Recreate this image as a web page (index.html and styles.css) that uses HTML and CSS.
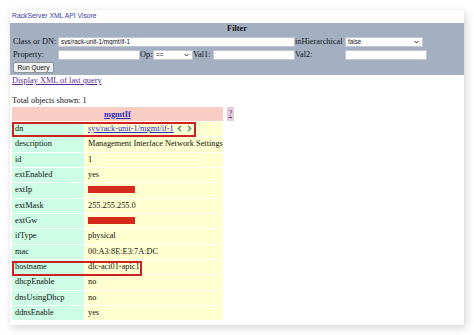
FILE: index.html
```html
<!DOCTYPE html>
<html>
<head>
<meta charset="utf-8">
<link rel="stylesheet" href="styles.css">
</head>
<body>
<div class="card">
  <div class="title">RackServer XML API Visore</div>
  <div class="filter">
    <div class="filter-title">Filter</div>
    <div class="filter-grid">
      <label class="lbl">Class or DN:</label>
      <input class="inp span5" type="text" value="sys/rack-unit-1/mgmt/if-1">
      <label class="lbl">inHierarchical</label>
      <span class="sel sel-wide"><span class="sel-text">false</span><svg class="chev" viewBox="0 0 8 6" width="5" height="4"><path d="M1 1.5 L4 4.5 L7 1.5" fill="none" stroke="#222" stroke-width="1.6"/></svg></span>

      <label class="lbl">Property:</label>
      <input class="inp" type="text" value="">
      <label class="lbl">Op:</label>
      <span class="sel"><span class="sel-text">==</span><svg class="chev" viewBox="0 0 8 6" width="5" height="4"><path d="M1 1.5 L4 4.5 L7 1.5" fill="none" stroke="#222" stroke-width="1.6"/></svg></span>
      <label class="lbl">Val1:</label>
      <input class="inp" type="text" value="">
      <label class="lbl">Val2:</label>
      <input class="inp" type="text" value="">

      <button class="btn" type="button">Run Query</button>
    </div>
  </div>
  <div class="xml-link"><a href="#">Display XML of last query</a></div>
  <div class="total">Total objects shown: 1</div>
  <div class="table-wrap">
    <table class="obj">
      <thead>
        <tr>
          <th colspan="2" class="head"><a href="#">mgmtIf</a></th>
          <th class="help-cell"><span class="help">?</span></th>
        </tr>
      </thead>
      <tbody>
        <tr><td class="k">dn</td><td class="v"><a href="#">sys/rack-unit-1/mgmt/if-1</a><svg class="nav" viewBox="0 0 18 8" width="17" height="7"><path d="M5 1 L2 4 L5 7" fill="none" stroke="#3f8f8c" stroke-width="1.6"/><path d="M13 1 L16 4 L13 7" fill="none" stroke="#3f8f8c" stroke-width="1.6"/></svg></td><td class="e"></td></tr>
        <tr><td class="k">description</td><td class="v">Management Interface Network Settings</td><td class="e"></td></tr>
        <tr><td class="k">id</td><td class="v">1</td><td class="e"></td></tr>
        <tr><td class="k">extEnabled</td><td class="v">yes</td><td class="e"></td></tr>
        <tr><td class="k">extIp</td><td class="v"><span class="redact"></span></td><td class="e"></td></tr>
        <tr><td class="k">extMask</td><td class="v">255.255.255.0</td><td class="e"></td></tr>
        <tr><td class="k">extGw</td><td class="v"><span class="redact"></span></td><td class="e"></td></tr>
        <tr><td class="k">ifType</td><td class="v">physical</td><td class="e"></td></tr>
        <tr><td class="k">mac</td><td class="v">00:A3:8E:E3:7A:DC</td><td class="e"></td></tr>
        <tr><td class="k">hostname</td><td class="v">dlc-aci01-apic1</td><td class="e"></td></tr>
        <tr><td class="k">dhcpEnable</td><td class="v">no</td><td class="e"></td></tr>
        <tr><td class="k">dnsUsingDhcp</td><td class="v">no</td><td class="e"></td></tr>
        <tr><td class="k">ddnsEnable</td><td class="v">yes</td><td class="e"></td></tr>
      </tbody>
    </table>
    <div class="mark mark-dn"></div>
    <div class="mark mark-host"></div>
  </div>
</div>
</body>
</html>
```

FILE: styles.css
```css
html, body {
  margin: 0;
  padding: 0;
  background: #ffffff;
}
body {
  padding: 10px 10px 10px 10px;
  font-family: "Liberation Serif", "Times New Roman", serif;
  font-size: 8.3px;
  color: #111;
}
.card {
  width: 454px;
  height: 315px;
  background: #fff;
  box-shadow: 2px 3px 9px rgba(0, 0, 0, 0.16), 0 0 2px rgba(0, 0, 0, 0.06);
  overflow: hidden;
}
.title {
  font-family: "Liberation Sans", Arial, sans-serif;
  font-size: 6.8px;
  color: #3b3ba6;
  height: 13px;
  line-height: 10px;
  padding-top: 1px;
  padding-left: 2px;
  box-sizing: border-box;
}
.filter {
  background: #a2b0c2;
  height: 52px;
  padding: 0 3px;
  box-sizing: border-box;
}
.filter-title {
  text-align: center;
  font-weight: bold;
  height: 12px;
  line-height: 11px;
}
.filter-grid {
  display: grid;
  grid-template-columns: 45px 82px 13px 40px 20px 82px 50px 82px;
  grid-auto-rows: 11px;
  row-gap: 2px;
  margin-top: 1px;
  align-items: center;
}
.lbl {
  line-height: 11px;
  white-space: nowrap;
  color: #141414;
}
.inp {
  box-sizing: border-box;
  height: 10px;
  width: 100%;
  margin: 0;
  padding: 0 2px;
  border: 1px solid #c2c6cc;
  background: #fff;
  font-family: "Liberation Sans", Arial, sans-serif;
  font-size: 6.3px;
  color: #111;
  outline: none;
}
.span5 {
  grid-column: span 5;
}
.sel {
  position: relative;
  box-sizing: border-box;
  height: 10px;
  background: #fff;
  border: 1px solid #c4c7cc;
  display: flex;
  align-items: center;
  justify-content: space-between;
  padding: 0 3px 0 2px;
  font-family: "Liberation Sans", Arial, sans-serif;
  font-size: 6.3px;
  color: #222;
}
.sel-wide {
  width: 78px;
}
.sel .sel-text {
  line-height: 8px;
}
.chev {
  display: block;
}
.btn {
  grid-column: 1 / span 2;
  justify-self: start;
  box-sizing: border-box;
  height: 11px;
  width: 41px;
  margin: 0;
  padding: 0;
  border: 1px solid #8e939a;
  border-radius: 2px;
  background: #f1f1f1;
  font-family: "Liberation Sans", Arial, sans-serif;
  font-size: 6.6px;
  color: #111;
  line-height: 9px;
}
.xml-link {
  height: 12px;
  line-height: 12px;
  padding-left: 2px;
}
.xml-link a {
  color: #5a2a8e;
  text-decoration: underline;
}
.total {
  margin-top: 8px;
  height: 11px;
  line-height: 11px;
  padding-left: 2px;
}
.table-wrap {
  position: relative;
  margin-left: 1px;
}
.obj {
  border-collapse: separate;
  border-spacing: 1px;
  table-layout: fixed;
}
.obj th, .obj td {
  padding: 0 0 0 3px;
  white-space: nowrap;
  text-align: left;
}
.obj th.head {
  background: #f8cdc3;
  text-align: center;
  height: 14px;
  font-weight: bold;
  padding: 0;
}
.obj a {
  color: #2b2bc0;
  text-decoration: underline;
}
.help-cell {
  background: transparent;
  padding: 0 !important;
}
.help {
  display: block;
  margin-left: 3px;
  width: 7px;
  height: 14px;
  line-height: 14px;
  background: #ebcad8;
  color: #3b3bb0;
  text-align: center;
  font-weight: normal;
  text-decoration: underline;
}
.obj td {
  height: 14.33px;
  line-height: 14px;
}
.k {
  width: 69px;
  background: #cdfde5;
}
.v {
  width: 134px;
  background: #ffffd0;
}
.e {
  width: 10px;
  background: transparent;
}
.nav {
  display: inline-block;
  vertical-align: -1px;
  margin-left: 2px;
}
.redact {
  display: inline-block;
  width: 47px;
  height: 7px;
  background: #d62b1c;
  vertical-align: -1px;
}
.mark {
  position: absolute;
  border: 2px solid #cc2222;
  box-sizing: border-box;
}
.mark-dn {
  left: 1px;
  top: 16px;
  width: 184px;
  height: 15px;
}
.mark-host {
  left: 1px;
  top: 154.5px;
  width: 130px;
  height: 15px;
}
```
